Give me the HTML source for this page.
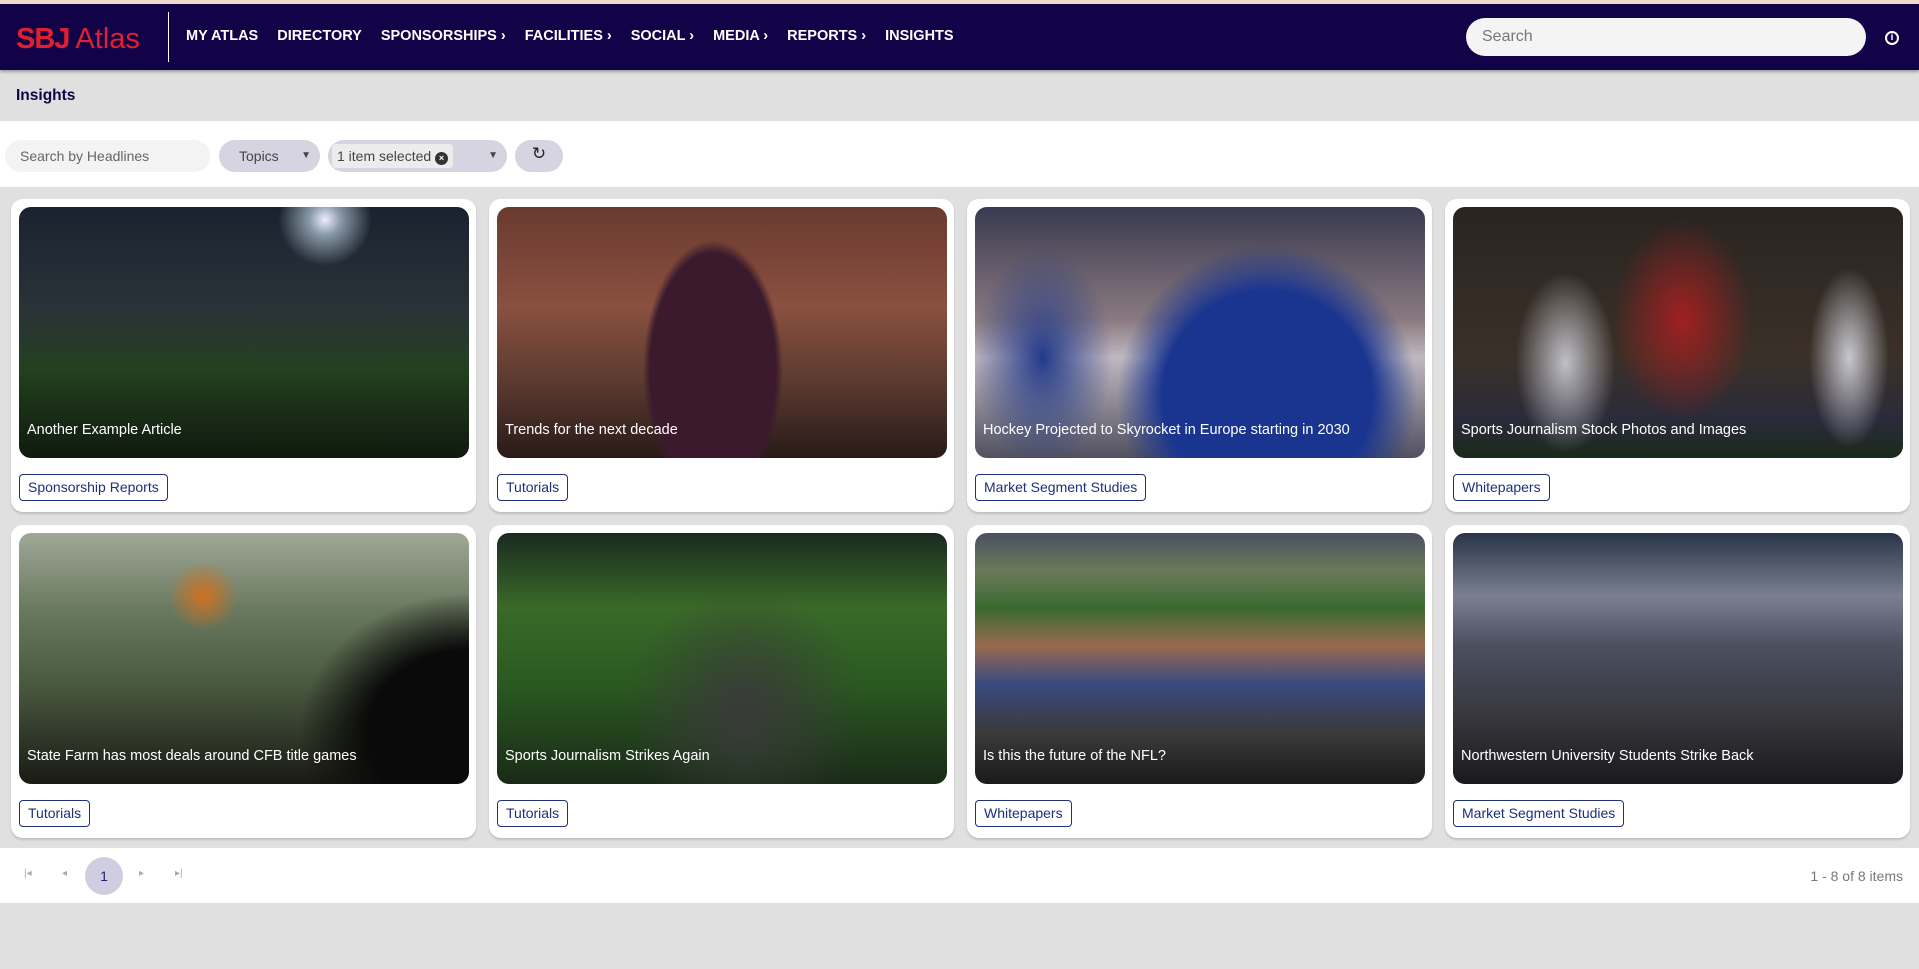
<!DOCTYPE html>
<html><head><meta charset="utf-8"><style>
*{box-sizing:border-box;margin:0;padding:0}
body{width:1919px;height:969px;overflow:hidden;background:#e0e0e0;font-family:"Liberation Sans",Arial,sans-serif;position:relative}
.top{position:absolute;left:0;top:0;width:1919px;height:4px;background:#f2dcd0}
.hdr{position:absolute;left:0;top:4px;width:1919px;height:66px;background:#120348;box-shadow:0 2px 3px rgba(0,0,0,.3)}
.logo{position:absolute;left:16px;top:19px;font-size:29px;color:#e0202e;letter-spacing:0}
.logo b{font-weight:900;letter-spacing:-1px;margin-right:6px}
.div{position:absolute;left:168px;top:8px;width:1px;height:50px;background:#fff}
.nav{position:absolute;top:24px;left:186px;display:flex;color:#fff;font-weight:bold;font-size:14.5px}
.nav span{margin-right:19px;white-space:nowrap}
.srch{position:absolute;left:1466px;top:14px;width:400px;height:38px;border-radius:19px;background:#f4f4f4;color:#777;font-size:16px;padding:10px 16px}
.info{position:absolute;left:1885px;top:27px;width:14px;height:14px;border:2px solid #fff;border-radius:50%;color:#fff;font-size:10px;font-weight:bold;text-align:center;line-height:10px}
.ins{position:absolute;left:16px;top:87px;font-size:15.5px;font-weight:bold;color:#120348}
.filt{position:absolute;left:0;top:121px;width:1919px;height:66px;background:#fff}
.ctl{position:absolute;top:19px;height:32px;border-radius:16px;font-size:14px;color:#444;padding-top:8px}
.grid{position:absolute;left:11px;top:199px}
.card{position:absolute;width:465px;height:313px;background:#fff;border-radius:12px;box-shadow:0 2px 2px rgba(0,0,0,.15)}
.img{position:absolute;left:8px;top:8px;width:450px;height:251px;border-radius:12px;overflow:hidden}
.img span{position:absolute;left:8px;bottom:20px;color:#fff;font-size:14.5px}
.tag{position:absolute;left:8px;top:275px;height:27px;border:1px solid #1f2f7a;border-radius:4px;color:#1f2f7a;font-size:14px;padding:4px 8px}
.pag{position:absolute;left:0;top:848px;width:1919px;height:55px;background:#fff}
</style></head><body>
<div class="top"></div>
<div class="hdr">
<div class="logo"><b>SBJ</b>Atlas</div>
<div class="div"></div>
<div class="nav"><span>MY ATLAS</span><span>DIRECTORY</span><span>SPONSORSHIPS ›</span><span>FACILITIES ›</span><span>SOCIAL ›</span><span>MEDIA ›</span><span>REPORTS ›</span><span>INSIGHTS</span></div>
<div class="srch">Search</div>
<div class="info">i</div>
</div>
<div class="ins">Insights</div>
<div class="filt">
<div class="ctl" style="left:5px;width:205px;background:#f3f3f3;color:#666;padding-left:15px">Search by Headlines</div>
<div class="ctl" style="left:219px;width:101px;background:#d6d4e0;padding-left:20px">Topics<span style="position:absolute;right:9px;font-size:10px;top:10px">▼</span></div>
<div class="ctl" style="left:328px;width:179px;background:#d6d4e0;padding-left:12px"><span style="background:#ececec;padding:4px 5px;border-radius:4px;margin-left:-8px">1 item selected <b style="display:inline-block;width:13px;height:13px;border-radius:50%;background:#333;color:#fff;font-size:9px;text-align:center;line-height:13px">×</b></span><span style="position:absolute;right:9px;font-size:10px;top:10px">▼</span></div>
<div class="ctl" style="left:515px;width:48px;background:#d6d4e0;text-align:center;font-size:17px;padding-top:4px;color:#222">↻</div>
</div>
<div class="grid">
<div class="card" style="left:0;top:0"><div class="img" style="background:radial-gradient(circle at 68% 5%,#eef 0,#8a9aa8 4%,transparent 12%),linear-gradient(180deg,#1a2230 0%,#2a3238 40%,#23401f 65%,#0f1a0e 100%)"><span>Another Example Article</span></div><div class="tag">Sponsorship Reports</div></div>
<div class="card" style="left:478px;top:0"><div class="img" style="background:radial-gradient(ellipse 70px 130px at 48% 65%,#3a1a2c 0,#3a1a2c 90%,transparent 100%),linear-gradient(180deg,#6a3a30 0%,#8a5040 40%,#5a3a30 70%,#2a1a18 100%)"><span>Trends for the next decade</span></div><div class="tag">Tutorials</div></div>
<div class="card" style="left:956px;top:0"><div class="img" style="background:radial-gradient(ellipse 150px 150px at 65% 75%,#1a3590 0,#1a3590 70%,transparent 100%),radial-gradient(ellipse 70px 110px at 15% 60%,#223a8a 0,transparent 100%),linear-gradient(180deg,#3a3a50 0%,#8a7a80 45%,#c0b8c0 60%,#505060 100%)"><span>Hockey Projected to Skyrocket in Europe starting in 2030</span></div><div class="tag">Market Segment Studies</div></div>
<div class="card" style="left:1434px;top:0"><div class="img" style="background:radial-gradient(ellipse 70px 100px at 51% 45%,#a02020 0,transparent 100%),radial-gradient(ellipse 40px 90px at 88% 60%,#c8c8d0 0,transparent 100%),radial-gradient(ellipse 50px 90px at 25% 62%,#c0c0c8 0,transparent 100%),linear-gradient(180deg,#2a2420 0%,#3a3028 60%,#2a2a3a 85%,#1a2a1a 100%)"><span>Sports Journalism Stock Photos and Images</span></div><div class="tag">Whitepapers</div></div>
<div class="card" style="left:0;top:326px"><div class="img" style="background:radial-gradient(ellipse 35px 35px at 41% 25%,#d07020 0,transparent 100%),radial-gradient(ellipse 170px 140px at 100% 80%,#0a0a0a 0,#0a0a0a 60%,transparent 100%),linear-gradient(180deg,#a0a898 0%,#6a7a60 30%,#4a5a40 60%,#1a1a14 100%)"><span>State Farm has most deals around CFB title games</span></div><div class="tag">Tutorials</div></div>
<div class="card" style="left:478px;top:326px"><div class="img" style="background:radial-gradient(ellipse 120px 120px at 55% 70%,#3a3a3a 0,transparent 100%),linear-gradient(180deg,#1a2a20 0%,#3a6a28 30%,#2a5a20 60%,#1a2a18 100%)"><span>Sports Journalism Strikes Again</span></div><div class="tag">Tutorials</div></div>
<div class="card" style="left:956px;top:326px"><div class="img" style="background:linear-gradient(180deg,#4a5060 0%,#6a7a5a 15%,#3a6a30 30%,#9a6a50 45%,#3a4a80 60%,#3a3a3a 80%,#1a1a1a 100%)"><span>Is this the future of the NFL?</span></div><div class="tag">Whitepapers</div></div>
<div class="card" style="left:1434px;top:326px"><div class="img" style="background:linear-gradient(180deg,#2a3448 0%,#7a8090 25%,#4a5060 45%,#3a3a40 70%,#1a1a1e 100%)"><span>Northwestern University Students Strike Back</span></div><div class="tag">Market Segment Studies</div></div>
</div>
<div class="pag">
<span style="position:absolute;left:24px;top:20px;font-size:10px;color:#aaa">|◂</span>
<span style="position:absolute;left:62px;top:20px;font-size:10px;color:#aaa">◂</span>
<div style="position:absolute;left:85px;top:9px;width:38px;height:38px;border-radius:50%;background:#d0cde0;color:#1a2a6a;font-size:14px;text-align:center;line-height:38px">1</div>
<span style="position:absolute;left:139px;top:20px;font-size:10px;color:#aaa">▸</span>
<span style="position:absolute;left:175px;top:20px;font-size:10px;color:#aaa">▸|</span>
<span style="position:absolute;right:16px;top:20px;font-size:14px;color:#777">1 - 8 of 8 items</span>
</div>
</body></html>
